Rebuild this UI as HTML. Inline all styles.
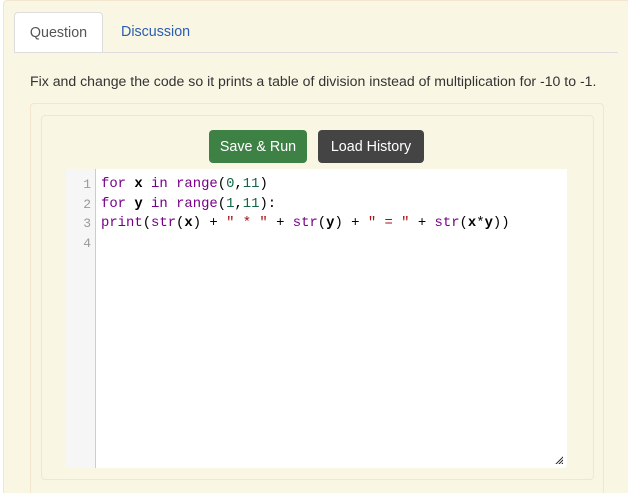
<!DOCTYPE html>
<html style="overflow:hidden;height:493px"><head><style>
body{margin:0;width:628px;height:493px;overflow:hidden;position:relative;background:#fff;font-family:"Liberation Sans",sans-serif;}
.outer{position:absolute;left:3px;top:0;width:624px;height:492px;background:#faf6e4;border:1px solid #f3e6cc;border-bottom:none;border-right:none;border-radius:4px 0 0 0;}
.tabline{position:absolute;left:14px;top:52px;width:604px;height:1px;background:#ddd;}
.tab{position:absolute;top:12px;height:40px;line-height:40px;font-size:14.3px;}
.t1{left:14px;width:87px;background:#fff;border:1px solid #ddd;border-bottom:none;border-radius:4px 4px 0 0;text-align:center;color:#555;}
.t2{left:121px;color:#2a5db0;}
.q{position:absolute;left:30px;top:73px;font-size:14.1px;color:#333;}
.box1{position:absolute;left:30px;top:103px;width:572px;height:389px;border:1px solid #f3e6cc;border-bottom:none;border-radius:4px 4px 0 0;}
.box2{position:absolute;left:41px;top:115px;width:551px;height:363px;border:1px solid #f3e6cc;border-radius:4px;}
.btn{position:absolute;top:130px;height:33px;line-height:34px;color:#fff;font-size:14.3px;text-align:center;border-radius:4px;}
.b1{left:209px;width:98px;background:#3e8145;}
.b2{left:318px;width:106px;background:#444;}
.gut{position:absolute;left:66px;top:169px;width:29px;height:299px;background:#f6f6f6;border-right:1px solid #ccc;}
.code{position:absolute;left:96px;top:169px;width:471px;height:299px;background:#fff;border-radius:0 0 4px 0;}
pre{margin:0;font-family:"Liberation Mono",monospace;font-size:13.9px;line-height:19.5px;}
.ln{position:absolute;left:66px;top:175px;width:25px;text-align:right;color:#999;font-size:13px;}
.src{position:absolute;left:101px;top:175px;color:#000;}
.k{color:#708;}.n{color:#164;}.s{color:#a11;}.v{color:#000;font-weight:bold}
.rs{position:absolute;left:555px;top:456px;width:8px;height:8px;background:repeating-linear-gradient(135deg,#333 0 1px,transparent 1px 2px);clip-path:polygon(100% 0,100% 100%,0 100%);}
</style></head><body>
<div class="outer"></div>
<div class="tab t1">Question</div>
<div class="tab t2">Discussion</div>
<div class="tabline"></div>
<div class="q">Fix and change the code so it prints a table of division instead of multiplication for -10 to -1.</div>
<div class="box1"></div>
<div class="box2"></div>
<div class="btn b1">Save &amp; Run</div>
<div class="btn b2">Load History</div>
<div class="gut"></div>
<div class="code"></div>
<pre class="ln">1
2
3
4</pre>
<pre class="src"><span class="k">for</span> <span class="v">x</span> <span class="k">in</span> <span class="k">range</span>(<span class="n">0</span>,<span class="n">11</span>)
<span class="k">for</span> <span class="v">y</span> <span class="k">in</span> <span class="k">range</span>(<span class="n">1</span>,<span class="n">11</span>):
<span class="k">print</span>(<span class="k">str</span>(<span class="v">x</span>) + <span class="s">" * "</span> + <span class="k">str</span>(<span class="v">y</span>) + <span class="s">" = "</span> + <span class="k">str</span>(<span class="v">x</span>*<span class="v">y</span>))</pre>
<div class="rs"></div>
</body></html>
